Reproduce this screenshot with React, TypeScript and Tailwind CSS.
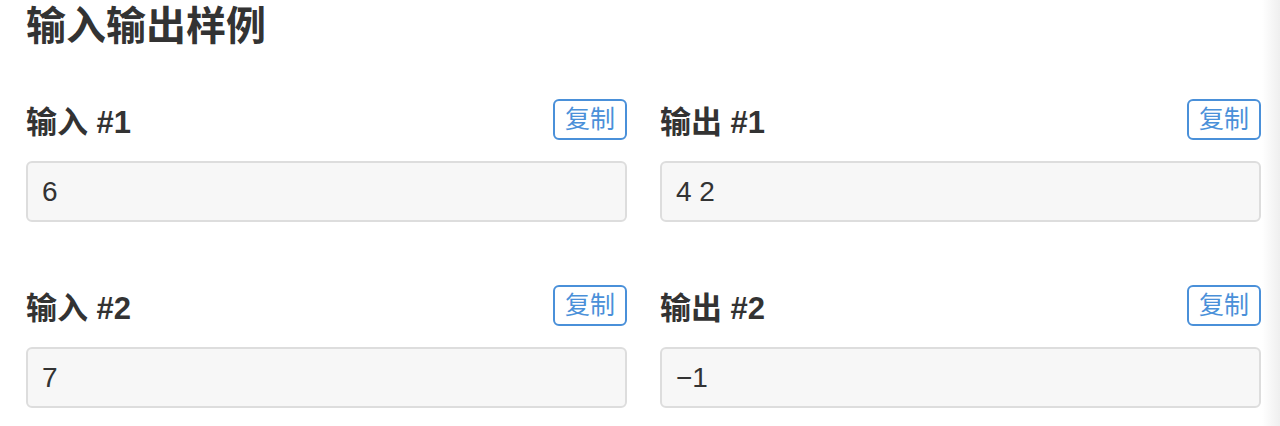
import React from "react";

const font = { fontFamily: '"Liberation Sans", "Noto Sans CJK SC", sans-serif' };

function Sample({ label, value }: { label: string; value: string }) {
  return (
    <div className="flex flex-col">
      <div className="flex h-[41px] items-center justify-between">
        <div className="text-[31px] font-bold leading-[41px] text-[#333] pt-[5px]">{label}</div>
        <button className="flex h-[41px] w-[74px] items-center justify-center rounded-[6px] border-2 border-[#4a90d9] text-[25px] leading-none text-[#4a90d9]">
          复制
        </button>
      </div>
      <div className="mt-[21px] flex h-[61px] items-center rounded-[6px] border-2 border-[#dddddd] bg-[#f7f7f7] px-[14px] text-[28px] text-[#333]">
        {value}
      </div>
    </div>
  );
}

export default function App() {
  return (
    <div className="relative h-[426px] w-[1280px] overflow-hidden bg-white" style={font}>
      <div className="px-[26px] pr-[19px]">
        <h3 className="text-[40px] font-bold leading-[52px] text-[#333]">输入输出样例</h3>
        <div className="mt-[47px] grid grid-cols-2 gap-x-[33px] gap-y-[63px]">
          <Sample label="输入 #1" value="6" />
          <Sample label="输出 #1" value="4 2" />
          <Sample label="输入 #2" value="7" />
          <Sample label="输出 #2" value="−1" />
        </div>
      </div>
      <div className="pointer-events-none absolute right-0 top-0 h-full w-[18px] bg-gradient-to-r from-white/0 to-[#efefef]" />
    </div>
  );
}
